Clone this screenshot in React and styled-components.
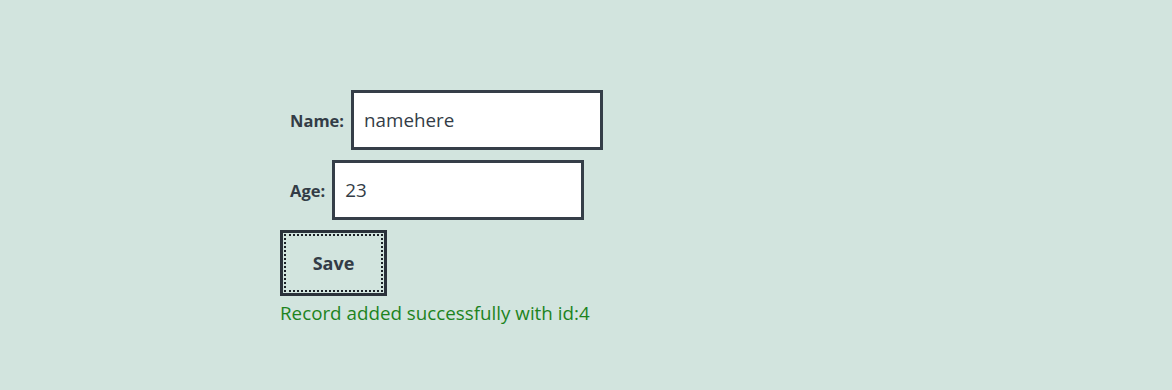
import React from 'react';
import styled, { createGlobalStyle } from 'styled-components';

const GlobalStyle = createGlobalStyle`
  html, body {
    margin: 0;
    background: #d2e4de;
    font-family: "Open Sans", "Noto Sans", sans-serif;
    color: #333c46;
  }
`;

const Page = styled.div`
  min-height: 390px;
  padding: 90px 0 0 280px;
  box-sizing: border-box;
`;

const Form = styled.form`
  display: flex;
  flex-direction: column;
  align-items: flex-start;
  gap: 10px;
`;

const Row = styled.div`
  display: flex;
  align-items: center;
  padding-left: 10px;
`;

const Label = styled.label`
  font-weight: bold;
  font-size: 16.5px;
  margin-right: 7px;
`;

const Input = styled.input`
  width: 252px;
  height: 60px;
  box-sizing: border-box;
  border: 3px solid #353e48;
  background: #fff;
  padding: 0 10px;
  font-family: inherit;
  font-size: 18.8px;
  color: #333c46;
  outline: none;
`;

const Button = styled.button`
  width: 107px;
  height: 66px;
  box-sizing: border-box;
  border: 3px solid #2b323b;
  background: transparent;
  font-family: inherit;
  font-weight: bold;
  font-size: 18px;
  color: #333c46;
  outline: 2px dotted #1c2128;
  outline-offset: -6px;
`;

const Message = styled.div`
  margin-top: -6px;
  font-size: 18.8px;
  color: #1d831d;
`;

export default function App() {
  return (
    <>
      <GlobalStyle />
      <Page>
        <Form onSubmit={(e) => e.preventDefault()}>
          <Row>
            <Label>Name:</Label>
            <Input defaultValue="namehere" />
          </Row>
          <Row>
            <Label>Age:</Label>
            <Input defaultValue="23" />
          </Row>
          <Button type="submit">Save</Button>
          <Message>Record added successfully with id:4</Message>
        </Form>
      </Page>
    </>
  );
}
